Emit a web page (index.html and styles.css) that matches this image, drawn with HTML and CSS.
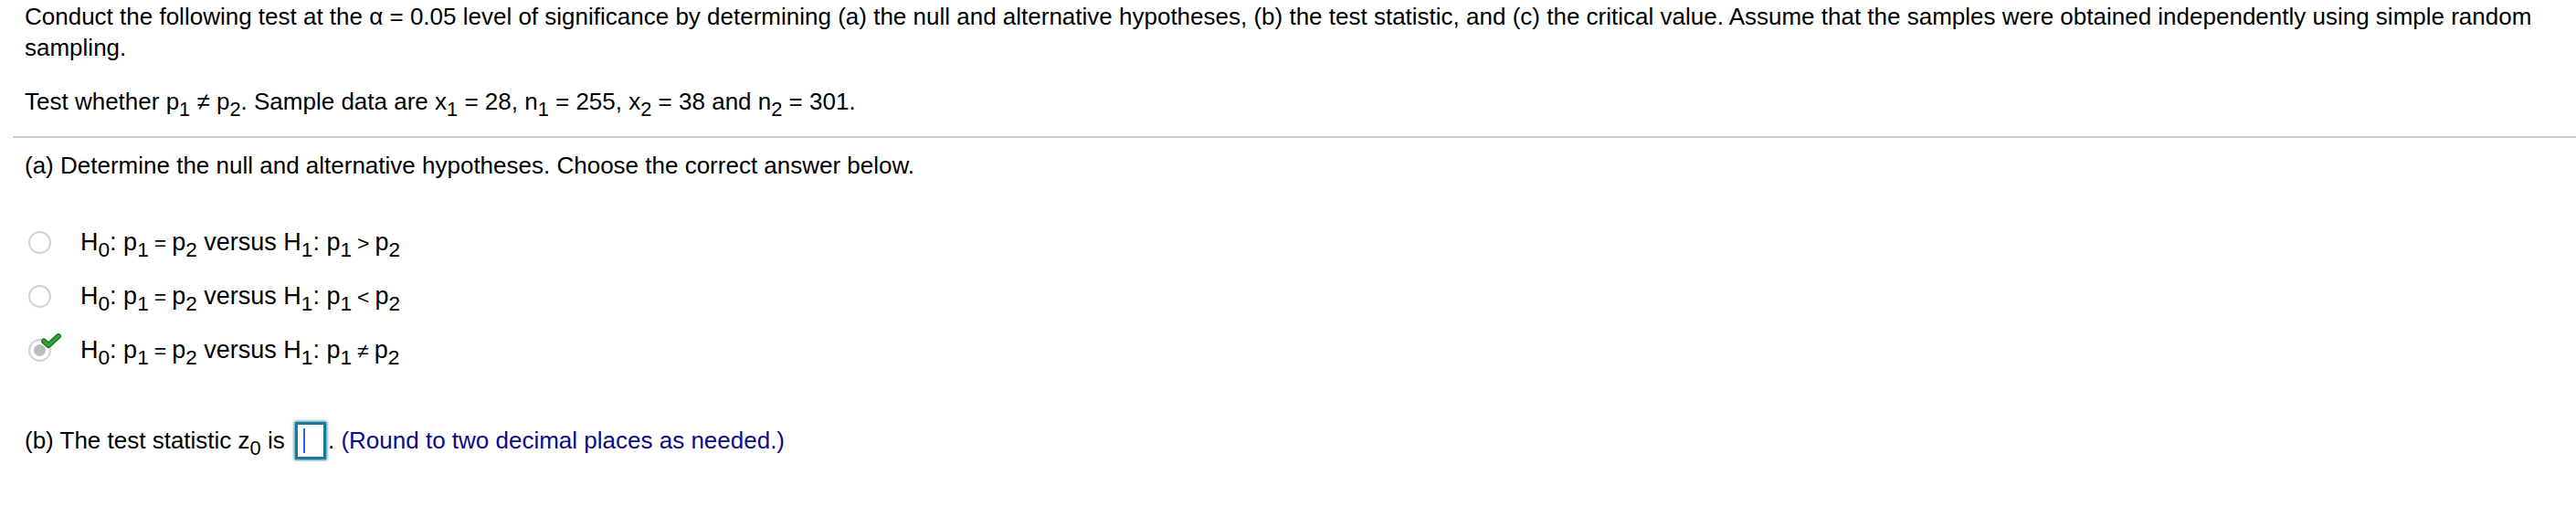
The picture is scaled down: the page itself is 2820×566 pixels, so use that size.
FILE: index.html
```html
<!DOCTYPE html>
<html>
<head>
<meta charset="utf-8">
<link rel="stylesheet" href="styles.css">
</head>
<body>
<div class="question">
  <p class="intro">Conduct the following test at the α = 0.05 level of significance by determining (a) the null and alternative hypotheses, (b) the test statistic, and (c) the critical value. Assume that the samples were obtained independently using simple random sampling.</p>
  <p class="data">Test whether p<sub>1</sub> ≠ p<sub>2</sub>. Sample data are x<sub>1</sub> = 28, n<sub>1</sub> = 255, x<sub>2</sub> = 38 and n<sub>2</sub> = 301.</p>
</div>
<div class="sep"></div>
<div class="parts">
  <p class="part-a">(a) Determine the null and alternative hypotheses. Choose the correct answer below.</p>
  <ul class="options">
    <li class="option">
      <span class="radio"></span>
      <span class="math">H<sub>0</sub>: p<sub>1</sub><span class="op">=</span>p<sub>2</sub> versus H<sub>1</sub>: p<sub>1</sub><span class="op">&gt;</span>p<sub>2</sub></span>
    </li>
    <li class="option">
      <span class="radio"></span>
      <span class="math">H<sub>0</sub>: p<sub>1</sub><span class="op">=</span>p<sub>2</sub> versus H<sub>1</sub>: p<sub>1</sub><span class="op">&lt;</span>p<sub>2</sub></span>
    </li>
    <li class="option">
      <span class="radio checked">
        <svg class="check" width="22" height="17" viewBox="0 0 22 17"><path d="M3 8.5 L8 13 L19 3" fill="none" stroke="#1c7423" stroke-width="6" stroke-linecap="round" stroke-linejoin="round"/><path d="M3 8.5 L8 13 L19 3" fill="none" stroke="#2e9e35" stroke-width="3.6" stroke-linecap="round" stroke-linejoin="round"/></svg>
      </span>
      <span class="math">H<sub>0</sub>: p<sub>1</sub><span class="op">=</span>p<sub>2</sub> versus H<sub>1</sub>: p<sub>1</sub><span class="op">≠</span>p<sub>2</sub></span>
    </li>
  </ul>
  <p class="part-b">(b) The test statistic z<sub>0</sub> is <span class="answer-box"><span class="caret"></span></span>. <span class="hint">(Round to two decimal places as needed.)</span></p>
</div>
</body>
</html>
```

FILE: styles.css
```css
html, body {
  margin: 0;
  padding: 0;
  background: #ffffff;
}
body {
  font-family: "Liberation Sans", Arial, sans-serif;
  font-size: 26px;
  color: #000;
}
p {
  margin: 0;
}
sub {
  font-size: 0.84em;
  vertical-align: -0.3em;
  line-height: 0;
}
.question {
  padding: 1px 20px 0 27px;
}
.intro {
  line-height: 34px;
}
.data {
  margin-top: 25px;
  line-height: 34px;
}
.sep {
  margin: 21px 0 0 14px;
  height: 2px;
  background: #c9cedb;
}
.parts {
  padding: 0 20px 0 27px;
}
.part-a {
  margin-top: 13px;
  line-height: 34px;
}
.options {
  list-style: none;
  margin: 50px 0 0 0;
  padding: 0;
  display: flex;
  flex-direction: column;
  gap: 24px;
}
.option {
  display: flex;
  align-items: center;
  height: 35px;
}
.radio {
  position: relative;
  width: 21px;
  height: 21px;
  border: 2px solid #d2d2d2;
  border-radius: 50%;
  margin-left: 4px;
  margin-right: 32px;
  box-sizing: content-box;
  flex: none;
}
.radio.checked::after {
  content: "";
  position: absolute;
  left: 4px;
  top: 4px;
  width: 13px;
  height: 13px;
  border-radius: 50%;
  background: #bdbdbd;
}
.check {
  position: absolute;
  left: 12px;
  top: -8px;
  z-index: 1;
}
.math {
  font-size: 27px;
}
.math .op {
  font-size: 0.85em;
  padding: 0 6px;
}
.part-b {
  margin-top: 58px;
  line-height: 46px;
  white-space: pre;
}
.answer-box {
  display: inline-block;
  vertical-align: middle;
  width: 28px;
  height: 35px;
  border: 3px solid #1b7a99;
  box-shadow: 0 0 3px 1px #3d8eaa;
  background: #fff;
  position: relative;
  margin: -4px 2px 0 4px;
}
.caret {
  position: absolute;
  left: 6px;
  top: 4px;
  width: 2px;
  height: 27px;
  background: #2c5fd6;
}
.hint {
  color: #0a0a8c;
}
```
